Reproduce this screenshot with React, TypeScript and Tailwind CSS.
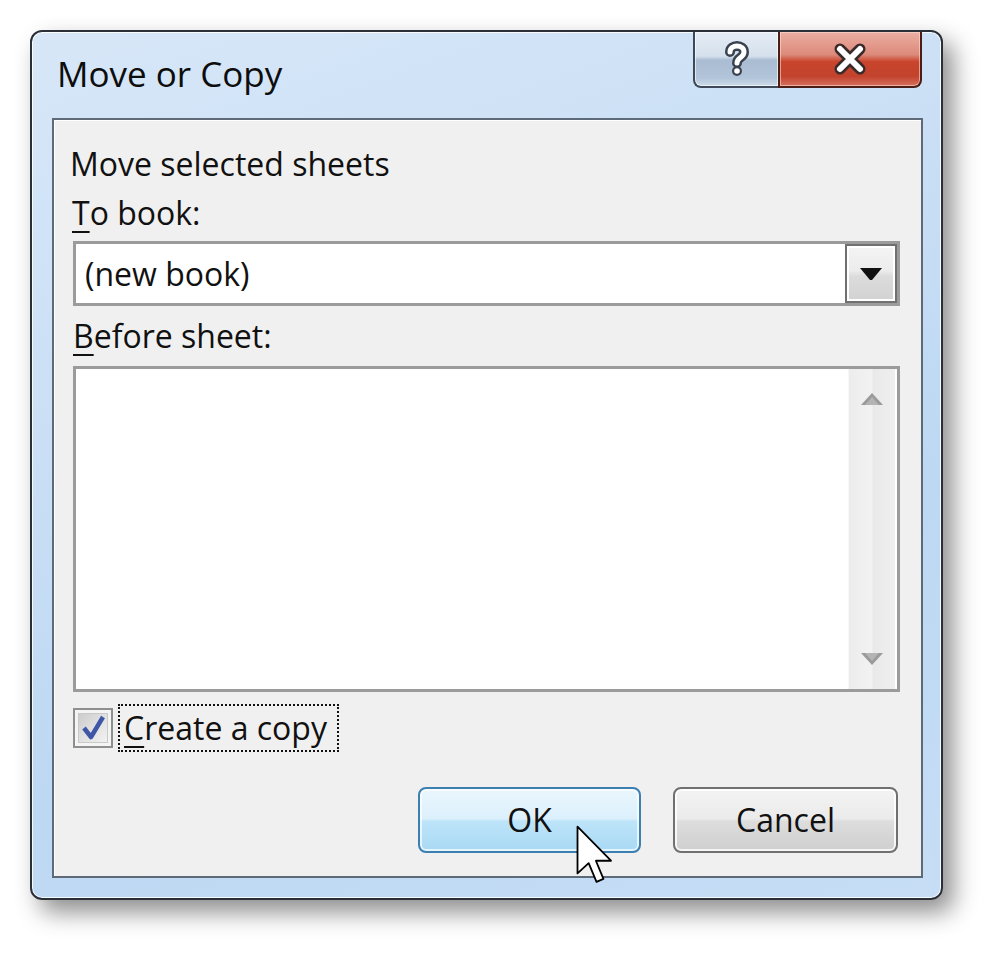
export default function App() {
  return (
    <div className="relative w-[1000px] h-[957px] bg-white pl-[30px] pt-[30px] font-['Open_Sans','Noto_Sans',sans-serif] text-[#111]">
      <div className="w-[913px] h-[870px] rounded-[12px] border-2 border-[#2b3038] bg-[linear-gradient(160deg,#d7e7f8_0%,#cadff5_35%,#bdd8f3_65%,#c6ddf5_100%)] shadow-[10px_12px_24px_rgba(0,0,0,0.45),inset_0_0_0_1px_rgba(255,255,255,0.85)] flex flex-col overflow-hidden">
        {/* Title bar */}
        <div className="h-[86px] flex justify-between items-start">
          <div className="pl-[25px] pt-[22px] text-[35px] leading-[40px] text-[#0d0d0d]">Move or Copy</div>
          <div className="flex mr-[19px]">
            <div className="w-[85px] h-[56px] border-l-2 border-b-2 border-[#3d4858] rounded-bl-[8px] bg-[linear-gradient(to_bottom,#e6edf6_0%,#d4e0ec_45%,#aabcd2_52%,#b2c4d9_85%,#cddbea_100%)] shadow-[inset_0_0_0_1px_rgba(255,255,255,0.6)] flex items-center justify-center">
              <svg width="30" height="38" viewBox="0 0 30 38">
                <path d="M8 12 C8 4 22 4 22 12 C22 18 15 17 15 23" fill="none" stroke="#3a4250" strokeWidth="10" strokeLinecap="round" />
                <circle cx="15" cy="31" r="5" fill="#3a4250" />
                <path d="M8 12 C8 4 22 4 22 12 C22 18 15 17 15 23" fill="none" stroke="#ffffff" strokeWidth="5" strokeLinecap="round" />
                <circle cx="15" cy="31" r="2.8" fill="#ffffff" />
              </svg>
            </div>
            <div className="w-[144px] h-[56px] border-l-2 border-r-2 border-b-2 border-[#4a1d16] rounded-br-[8px] bg-[linear-gradient(to_bottom,#ecaea2_0%,#dc8a7a_42%,#c9442c_55%,#c2432d_82%,#d5705d_100%)] shadow-[inset_0_0_0_1px_rgba(255,220,210,0.6)] flex items-center justify-center">
              <svg width="40" height="34" viewBox="0 0 40 34">
                <path d="M10 7 L30 27 M30 7 L10 27" stroke="#3b2a2a" strokeWidth="11" strokeLinecap="round" />
                <path d="M10 7 L30 27 M30 7 L10 27" stroke="#ffffff" strokeWidth="6" strokeLinecap="round" />
              </svg>
            </div>
          </div>
        </div>

        {/* Client area */}
        <div className="flex-1 ml-[20px] mr-[18px] mb-[20px] border-2 border-[#5f6a78] bg-[#f0f0f0] shadow-[inset_1px_1px_0_#ffffff] flex flex-col pl-[19px] pr-[21px] pt-[24px] text-[32px] leading-[40px]">
          <div className="-ml-[3px] h-[40px]">Move selected sheets</div>
          <div className="-ml-[1px] mt-[9px] h-[40px]"><span className="underline decoration-2 underline-offset-[6px]">T</span>o book:</div>

          {/* Combo box */}
          <div className="mt-[8px] h-[65px] border-[3px] border-[#9b9b9b] bg-white flex items-stretch">
            <div className="flex-1 flex items-center pl-[9px]">(new book)</div>
            <div className="w-[52px] border-2 border-[#707070] shadow-[inset_0_0_0_2px_#ffffff] bg-[linear-gradient(to_bottom,#f4f4f4_0%,#ececec_45%,#dcdcdc_55%,#d2d2d2_100%)] flex items-center justify-center">
              <svg width="24" height="14" viewBox="0 0 24 14">
                <path d="M1 1 L23 1 L13 13 L11 13 Z" fill="#111" />
              </svg>
            </div>
          </div>

          <div className="mt-[10px] h-[40px]"><span className="underline decoration-2 underline-offset-[6px]">B</span>efore sheet:</div>

          {/* List box */}
          <div className="mt-[10px] h-[326px] border-[3px] border-[#9b9b9b] bg-white flex justify-end pr-[2px]">
            <div className="w-[47px] border-l border-[#f7f7f7] flex flex-col justify-between items-center py-[24px] bg-[linear-gradient(to_right,#ececec_0%,#f2f2f2_50%,#e9e9e9_52%,#efefef_100%)]">
              <svg width="22" height="12" viewBox="0 0 22 12">
                <path d="M0 12 L11 0 L22 12 Z" fill="#9a9a9a" />
                <path d="M4 12 L11 4 L18 12 Z" fill="#b4b4b4" />
              </svg>
              <svg width="22" height="12" viewBox="0 0 22 12">
                <path d="M0 0 L22 0 L11 12 Z" fill="#9a9a9a" />
                <path d="M4 0 L18 0 L11 8 Z" fill="#b4b4b4" />
              </svg>
            </div>
          </div>

          {/* Checkbox row */}
          <div className="mt-[12px] h-[48px] flex items-center">
            <div className="w-[40px] h-[40px] border-2 border-[#8e8f8f] bg-[#f4f4f4] p-[3px]">
              <div className="w-full h-full border border-[#c9c9c9] bg-[linear-gradient(135deg,#cdcdcd_0%,#e4e4e4_60%,#f2f2f2_100%)] flex items-center justify-center">
                <svg width="28" height="28" viewBox="0 0 28 28">
                  <path d="M5 14 L12 23 L24 3" fill="none" stroke="#3f56a6" strokeWidth="4.5" strokeLinejoin="round" />
                </svg>
              </div>
            </div>
            <div className="ml-[5px] h-[48px] w-[221px] border-2 border-dotted border-[#111] pl-[4px] flex items-center">
              <span><span className="underline decoration-2 underline-offset-[6px]">C</span>reate a copy</span>
            </div>
          </div>

          {/* Buttons */}
          <div className="mt-[35px] flex justify-end gap-[32px] pr-[2px]">
            <div className="w-[223px] h-[66px] rounded-[8px] border-2 border-[#3c7fb1] shadow-[inset_0_0_0_2px_rgba(255,255,255,0.7)] bg-[linear-gradient(to_bottom,#eaf6fd_0%,#dbf0fc_48%,#bde4f9_52%,#a9d9f4_100%)] flex items-center justify-center">OK</div>
            <div className="w-[225px] h-[66px] rounded-[8px] border-2 border-[#707070] shadow-[inset_0_0_0_2px_rgba(255,255,255,0.8)] bg-[linear-gradient(to_bottom,#f3f3f3_0%,#ebebeb_48%,#dddddd_52%,#cfcfcf_100%)] flex items-center justify-center">Cancel</div>
          </div>
        </div>
      </div>

      {/* Mouse cursor */}
      <svg className="absolute left-[576px] top-[825px]" width="38" height="60" viewBox="0 0 12.6 19.8">
        <path d="M0.5 0.5 L0.5 16 L4.2 12.6 L6.8 18.8 L9.1 17.8 L6.6 11.8 L11.6 11.8 Z" fill="#ffffff" stroke="#000000" strokeWidth="0.6" strokeLinejoin="round" />
      </svg>
    </div>
  );
}
